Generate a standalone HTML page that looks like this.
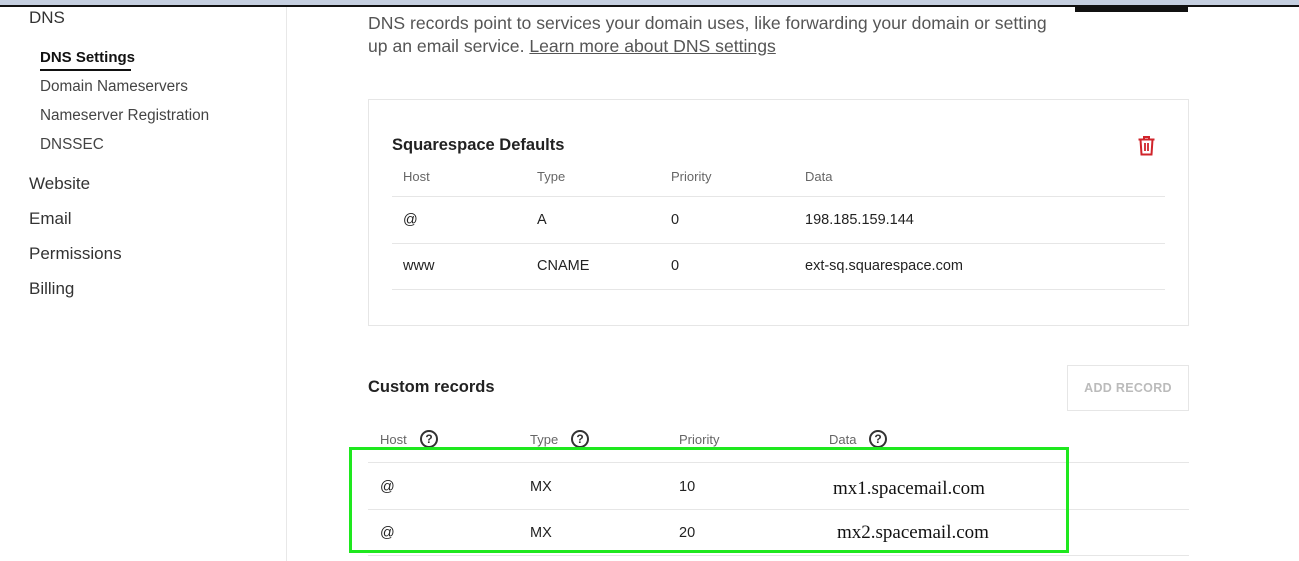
<!DOCTYPE html>
<html><head><meta charset="utf-8"><style>
*{margin:0;padding:0;box-sizing:border-box}
body{width:1299px;height:561px;position:relative;overflow:hidden;background:#fff;font-family:"Liberation Sans",sans-serif;color:#222}
.a{position:absolute;white-space:nowrap;line-height:1}
.nav{font-size:17px;color:#333}
.sub{font-size:15.3px;color:#444}
.h{font-size:13px;color:#666}
.c{font-size:14.5px;color:#222}
.ln{position:absolute;height:1px;background:#e6e6e6}
.q{position:absolute;width:18px;height:18px;border:2px solid #333;border-radius:50%;font-size:12px;font-weight:bold;text-align:center;line-height:14px;color:#333}
</style></head><body>
<div style="position:absolute;left:0;top:0;width:1299px;height:5px;background:#c5cfe0"></div>
<div style="position:absolute;left:0;top:5px;width:1299px;height:2px;background:#111"></div>
<div style="position:absolute;left:1075px;top:5px;width:113px;height:7px;background:#111"></div>
<div style="position:absolute;left:286px;top:7px;width:1px;height:554px;background:#e8e8e8"></div>

<div class="a nav" style="left:29px;top:9px">DNS</div>
<div class="a sub" style="left:40px;top:50px;color:#111;font-weight:bold;font-size:15px">DNS Settings</div>
<div style="position:absolute;left:40px;top:69px;width:91px;height:2px;background:#111"></div>
<div class="a sub" style="left:40px;top:79px">Domain Nameservers</div>
<div class="a sub" style="left:40px;top:108px">Nameserver Registration</div>
<div class="a sub" style="left:40px;top:137px">DNSSEC</div>
<div class="a nav" style="left:29px;top:175px">Website</div>
<div class="a nav" style="left:29px;top:210px">Email</div>
<div class="a nav" style="left:29px;top:245px">Permissions</div>
<div class="a nav" style="left:29px;top:280px">Billing</div>

<div class="a" style="left:368px;top:15px;font-size:17.6px;color:#555">DNS records point to services your domain uses, like forwarding your domain or setting</div>
<div class="a" style="left:368px;top:38px;font-size:17.6px;color:#555">up an email service. <span style="text-decoration:underline">Learn more about DNS settings</span></div>

<div style="position:absolute;left:368px;top:99px;width:821px;height:227px;border:1px solid #e6e6e6"></div>
<div class="a" style="left:392px;top:137px;font-size:16.5px;color:#222;font-weight:bold">Squarespace Defaults</div>
<svg style="position:absolute;left:1137px;top:135px" width="19" height="21" viewBox="0 0 19 21"><path d="M1.5 4.5h16M7 4.5V2h5v2.5M3.5 4.5l1 15h10l1-15" fill="none" stroke="#d0242b" stroke-width="2"/><path d="M8 8v8M11 8v8" stroke="#d0242b" stroke-width="1.8"/></svg>
<div class="a h" style="left:403px;top:170px">Host</div>
<div class="a h" style="left:537px;top:170px">Type</div>
<div class="a h" style="left:671px;top:170px">Priority</div>
<div class="a h" style="left:805px;top:170px">Data</div>
<div class="ln" style="left:392px;top:196px;width:773px"></div>
<div class="a c" style="left:403px;top:213px">@</div>
<div class="a c" style="left:537px;top:213px">A</div>
<div class="a c" style="left:671px;top:213px">0</div>
<div class="a c" style="left:805px;top:213px">198.185.159.144</div>
<div class="ln" style="left:392px;top:243px;width:773px"></div>
<div class="a c" style="left:403px;top:259px">www</div>
<div class="a c" style="left:537px;top:259px">CNAME</div>
<div class="a c" style="left:671px;top:259px">0</div>
<div class="a c" style="left:805px;top:259px">ext-sq.squarespace.com</div>
<div class="ln" style="left:392px;top:289px;width:773px"></div>

<div class="a" style="left:368px;top:379px;font-size:16.5px;font-weight:bold;color:#222">Custom records</div>
<div style="position:absolute;left:1067px;top:365px;width:122px;height:46px;border:1px solid #e6e6e6;font-size:12.5px;font-weight:bold;color:#bbb;text-align:center;line-height:44px;letter-spacing:.3px">ADD RECORD</div>
<div class="a h" style="left:380px;top:433px">Host</div><div class="q" style="left:420px;top:430px">?</div>
<div class="a h" style="left:530px;top:433px">Type</div><div class="q" style="left:571px;top:430px">?</div>
<div class="a h" style="left:679px;top:433px">Priority</div>
<div class="a h" style="left:829px;top:433px">Data</div><div class="q" style="left:869px;top:430px">?</div>
<div class="ln" style="left:368px;top:462px;width:821px"></div>
<div class="a c" style="left:380px;top:480px">@</div>
<div class="a c" style="left:530px;top:480px">MX</div>
<div class="a c" style="left:679px;top:480px">10</div>
<div class="a" style="left:833px;top:479px;font-family:'Liberation Serif',serif;font-size:19px;color:#111">mx1.spacemail.com</div>
<div class="ln" style="left:368px;top:509px;width:821px"></div>
<div class="a c" style="left:380px;top:526px">@</div>
<div class="a c" style="left:530px;top:526px">MX</div>
<div class="a c" style="left:679px;top:526px">20</div>
<div class="a" style="left:837px;top:523px;font-family:'Liberation Serif',serif;font-size:19px;color:#111">mx2.spacemail.com</div>
<div class="ln" style="left:368px;top:555px;width:821px"></div>
<div style="position:absolute;left:349px;top:447px;width:720px;height:106px;border:3px solid #1ee81e"></div>
</body></html>
